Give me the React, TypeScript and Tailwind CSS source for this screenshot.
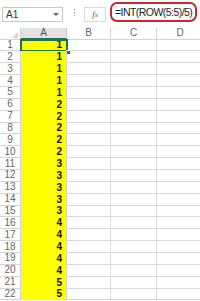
import React from "react";

const values = [1,1,1,1,1,2,2,2,2,2,3,3,3,3,3,4,4,4,4,4,5,5];

export default function App() {
  return (
    <div className="w-[200px] h-[301px] overflow-hidden bg-white relative" style={{ fontFamily: '"Liberation Sans", Arial, sans-serif' }}>
      {/* formula bar */}
      <div className="h-[27px] flex items-start relative">
        <div className="ml-[2px] mt-[7px] w-[61px] h-[15px] border border-[#c8c8c8] flex items-center justify-between px-[3px]">
          <span className="text-[10px] text-[#333] leading-none">A1</span>
          <svg width="6" height="4" viewBox="0 0 6 4"><path d="M0 0 L6 0 L3 3 Z" fill="#666" /></svg>
        </div>
        <div className="ml-[11px] mt-[9px] flex flex-col gap-[2px]">
          <div className="w-[1px] h-[1px] bg-[#999]" />
          <div className="w-[1px] h-[1px] bg-[#999]" />
          <div className="w-[1px] h-[1px] bg-[#999]" />
        </div>
        <div className="ml-[9px] mt-[7px] w-[22px] h-[15px] border border-[#d8d8d8] flex items-center justify-center">
          <span className="text-[9px] italic text-[#555] leading-none" style={{ fontFamily: '"Liberation Serif", serif' }}>f<span className="text-[7px]">x</span></span>
        </div>
        <div className="ml-[4px] mt-[2px] w-[87px] h-[20px] border-2 border-[#c22a30] rounded-[7px] flex items-center pl-[3px] overflow-hidden">
          <span className="text-[10.5px] text-[#222] leading-none tracking-[-0.55px] whitespace-nowrap">=INT(ROW(5:5)/5)</span>
        </div>
      </div>
      {/* header row */}
      <div className="h-[12px] flex border-b border-[#d4d4d4] relative mt-[0.5px]">
        <div className="w-[21px] shrink-0 border-r border-[#d4d4d4] relative">
          <svg className="absolute right-[2px] bottom-[1px]" width="6" height="6" viewBox="0 0 6 6"><path d="M6 0 L6 6 L0 6 Z" fill="#d6d6d6" /></svg>
        </div>
        <div className="w-[46px] shrink-0 bg-[#e2e2e2] border-r border-[#c8c8c8] border-b border-b-[#217346] flex items-center justify-center text-[10px] text-[#555] leading-none">A</div>
        <div className="w-[44px] shrink-0 border-r border-[#d4d4d4] flex items-center justify-center text-[10px] text-[#666] leading-none">B</div>
        <div className="w-[46px] shrink-0 border-r border-[#d4d4d4] flex items-center justify-center text-[10px] text-[#666] leading-none">C</div>
        <div className="w-[46px] shrink-0 flex items-center justify-center text-[10px] text-[#666] leading-none">D</div>
      </div>
      {/* rows */}
      {values.map((v, i) => (
        <div key={i} className="h-[11.87px] flex relative">
          <div className="w-[21px] shrink-0 border-r border-b border-[#d4d4d4] flex items-center justify-center text-[10px] text-[#666] leading-none">{i + 1}</div>
          <div className="w-[46px] shrink-0 bg-[#ffff00] border-r border-[#d4d4d4] flex items-center justify-end pr-[4px] text-[10px] font-bold text-[#111] leading-none">{v}</div>
          <div className="w-[44px] shrink-0 border-r border-b border-[#d8d8d8]" />
          <div className="w-[46px] shrink-0 border-r border-b border-[#d8d8d8]" />
          <div className="w-[46px] shrink-0 border-b border-[#d8d8d8]" />
          {i === 0 && (
            <>
              <div className="absolute left-[20px] top-[-1px] w-[48px] h-[13px] border-2 border-[#217346]" />
              <div className="absolute left-[66px] top-[10px] w-[3px] h-[3px] bg-[#217346] border border-white box-content" />
            </>
          )}
        </div>
      ))}
    </div>
  );
}
